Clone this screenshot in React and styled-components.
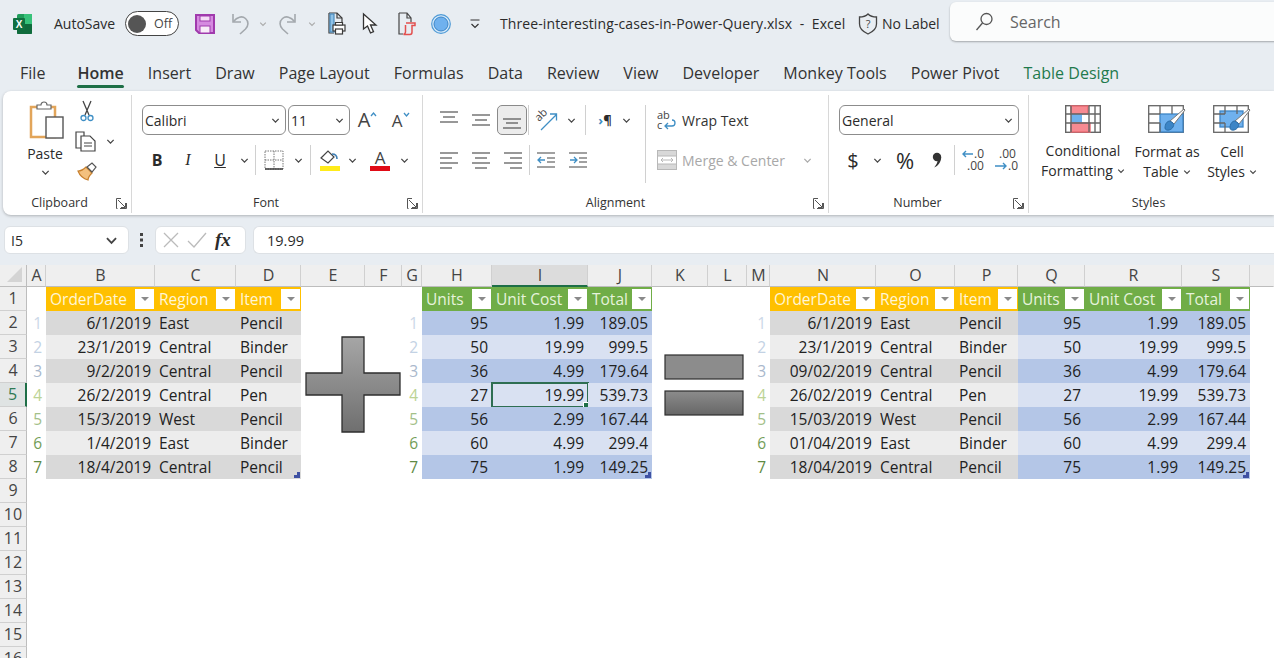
import React from 'react';
import styled, { createGlobalStyle } from 'styled-components';

const GlobalStyle = createGlobalStyle`
  html, body { margin: 0; padding: 0; height: 100%; background: #e8edf2; }
  * { box-sizing: border-box; }
  svg { overflow: visible; }
`;

const Page = styled.div`
  width: 1274px;
  height: 658px;
  overflow: hidden;
  background: #e8edf2;
  color: #2b2b2b;
  font-family: "Open Sans", "Liberation Sans", sans-serif;
`;

/* title bar */
const TitleBar = styled.div`
  height: 47px;
  display: flex;
  align-items: center;
  padding-left: 12px;
  font-size: 14px;
  white-space: nowrap;
`;
const Slot = styled.div`
  flex: none;
  width: ${(p) => p.$w}px;
  height: ${(p) => p.$h || 30}px;
  display: flex;
  align-items: center;
  justify-content: ${(p) => p.$start ? 'flex-start' : 'center'};
  font-size: 14px;
  letter-spacing: ${(p) => p.$ls || 0}px;
  color: ${(p) => p.$color || 'inherit'};
`;
const Toggle = styled.div`
  flex: none;
  width: 54px;
  height: 25px;
  border: 1px solid #444;
  border-radius: 13px;
  background: #fff;
  display: flex;
  align-items: center;
  gap: 8px;
  padding-left: 2px;
  font-size: 12.5px;
  color: #444;
  margin-right: 16px;
`;
const Knob = styled.span`
  width: 18px;
  height: 18px;
  border-radius: 50%;
  background: #555;
`;
const SearchBox = styled.div`
  flex: none;
  width: 330px;
  height: 39px;
  margin: -4px 0 0 8px;
  background: #fbfcfc;
  border-radius: 6px 0 0 6px;
  box-shadow: 0 1px 2px rgba(0, 0, 0, 0.3);
  display: flex;
  align-items: center;
  gap: 16px;
  padding-left: 25px;
  font-size: 16px;
  color: #666;
`;

/* tabs */
const Tabs = styled.div`
  height: 44px;
  display: flex;
  align-items: flex-end;
  gap: 24px;
  padding: 0 0 6px 20px;
`;
const Tab = styled.div`
  position: relative;
  font-size: 16px;
  line-height: 24px;
  letter-spacing: 0.03px;
  margin-right: ${(p) => p.$first ? 8 : 0}px;
  font-weight: ${(p) => p.$active ? 600 : 400};
  color: ${(p) => p.$green ? '#1f7a4d' : '#333'};
  &::after {
    content: '';
    display: ${(p) => p.$active ? 'block' : 'none'};
    position: absolute;
    left: 0;
    right: 0;
    bottom: -3px;
    height: 3px;
    border-radius: 2px;
    background: #1e6f47;
  }
`;

/* ribbon */
const Ribbon = styled.div`
  height: 124px;
  margin-left: 3px;
  background: #fff;
  border-radius: 8px 0 0 8px;
  box-shadow: 0 1px 3px rgba(0, 0, 0, 0.25);
  display: flex;
`;
const Group = styled.div`
  position: relative;
  flex: none;
  width: ${(p) => p.$w}px;
  height: 118px;
  margin-top: 4px;
  padding: 10px 0 0 ${(p) => p.$pad || 0}px;
  border-right: ${(p) => p.$last ? 'none' : '1px solid #d8d8d8'};
`;
const GroupLabel = styled.div`
  position: absolute;
  left: 0;
  right: 0;
  bottom: 2px;
  text-align: center;
  font-size: 12.5px;
  line-height: 16px;
  color: #333;
  padding-right: ${(p) => p.$shift || 0}px;
`;
const Launcher = styled.div`
  position: absolute;
  right: 4px;
  bottom: 4px;
  width: 11px;
  height: 11px;
  display: flex;
`;
const Row = styled.div`
  display: flex;
  align-items: center;
  height: 30px;
  margin-bottom: ${(p) => p.$mb ?? 10}px;
`;
const Combo = styled.div`
  flex: none;
  width: ${(p) => p.$w}px;
  height: 30px;
  margin-right: ${(p) => p.$mr || 0}px;
  border: 1px solid #8c8c8c;
  border-radius: 6px;
  display: flex;
  align-items: center;
  justify-content: space-between;
  padding: 0 5px 0 2px;
  font-size: 14px;
`;
const Sep = styled.div`
  flex: none;
  width: 1px;
  height: 30px;
  background: #d0d0d0;
  margin: 0 ${(p) => p.$m ?? 0}px;
`;
const Selected = styled.div`
  flex: none;
  width: 30px;
  height: 30px;
  border: 1px solid #8a8a8a;
  border-radius: 5px;
  background: #ececec;
  display: flex;
  align-items: center;
  justify-content: center;
`;
const ClipLayout = styled.div`
  display: flex;
  padding-left: 22px;
`;
const PasteCol = styled.div`
  width: 40px;
  margin-top: -4px;
  display: flex;
  flex-direction: column;
  align-items: center;
  font-size: 14px;
  line-height: 20px;
  svg.paste { margin: 0 0 1px 4px; }
  svg.chev { margin-top: 4px; }
`;
const SmallCol = styled.div`
  width: 60px;
  margin-top: -8px;
  display: flex;
  flex-direction: column;
  gap: 2px;
`;
const AlignLayout = styled.div`
  display: flex;
`;
const LongSep = styled.div`
  width: 1px;
  height: 78px;
  background: #d0d0d0;
`;
const WrapCol = styled.div`
  padding-left: 11px;
`;
const WrapRow = styled.div`
  display: flex;
  align-items: center;
  gap: 5px;
  height: 30px;
  margin-bottom: 10px;
  font-size: 14px;
  white-space: nowrap;
  color: ${(p) => p.$off ? '#a8a8a8' : '#333'};
`;
const StylesRow = styled.div`
  display: flex;
  padding-left: 11px;
`;
const StyleBtn = styled.div`
  flex: none;
  width: ${(p) => p.$w}px;
  display: flex;
  flex-direction: column;
  align-items: center;
  font-size: 14px;
  line-height: 20px;
  svg.big { margin-bottom: 8px; }
  span { display: flex; align-items: center; gap: 4px; white-space: nowrap; }
`;

/* formula bar */
const FormulaBar = styled.div`
  height: 28px;
  margin-top: 11px;
  display: flex;
  align-items: stretch;
  padding-left: 4px;
`;
const NameBox = styled.div`
  width: 125px;
  background: #fff;
  border: 1px solid #dde1e5;
  border-radius: 6px;
  display: flex;
  align-items: center;
  justify-content: space-between;
  padding: 0 10px 0 6px;
  font-size: 14px;
`;
const Dots = styled.div`
  width: 26px;
  display: flex;
  align-items: center;
  justify-content: center;
`;
const FxBox = styled.div`
  width: 91px;
  margin-right: 7px;
  background: #fff;
  border: 1px solid #dde1e5;
  border-radius: 6px;
  display: flex;
  align-items: center;
  gap: 8px;
  padding-left: 7px;
`;
const Fx = styled.span`
  font-family: "Liberation Serif", serif;
  font-style: italic;
  font-weight: 700;
  font-size: 19px;
  line-height: 20px;
`;
const FormulaInput = styled.div`
  flex: 1;
  background: #fff;
  border: 1px solid #dde1e5;
  border-right: none;
  border-radius: 6px 0 0 6px;
  display: flex;
  align-items: center;
  padding-left: 13px;
  font-size: 14.5px;
`;

/* sheet */
const Sheet = styled.div`
  position: relative;
  margin-top: 11px;
  background: #fff;
  display: grid;
  grid-template-columns: ${(p) => p.$cols};
  grid-template-rows: 22px;
  grid-auto-rows: 24px;
  font-size: 15.5px;
`;
const Corner = styled.div`
  background: #efefef;
  border-right: 1px solid #bdbdbd;
  border-bottom: 1px solid #bdbdbd;
  display: flex;
  align-items: flex-end;
  justify-content: flex-end;
  padding: 0 3px 3px 0;
`;
const ColHead = styled.div`
  background: ${(p) => p.$on ? '#dcdcdc' : '#efefef'};
  border-right: 1px solid ${(p) => p.$blank ? '#efefef' : '#d0d0d0'};
  border-bottom: ${(p) => p.$on ? '2px solid #1e6f47' : '1px solid #bdbdbd'};
  padding-left: 1px;
  text-align: center;
  font-size: 16px;
  line-height: 21px;
  color: #444;
`;
const RowHead = styled.div`
  background: ${(p) => p.$on ? '#dfe3e3' : '#efefef'};
  border-right: ${(p) => p.$on ? '2px solid #1e6f47' : '1px solid #bdbdbd'};
  border-bottom: 1px solid #d0d0d0;
  text-align: center;
  font-size: 16px;
  line-height: 23px;
  color: ${(p) => p.$on ? '#2f7a55' : '#444'};
`;
const Cell = styled.div`
  position: relative;
  background: ${(p) => p.$bg || '#fff'};
  color: ${(p) => p.$color || '#222'};
  text-align: ${(p) => p.$right ? 'right' : 'left'};
  line-height: 24px;
  padding: 0 4px;
  white-space: nowrap;
  overflow: visible;
`;
const HeadCell = styled.div`
  background: ${(p) => p.$bg};
  color: ${(p) => p.$fg};
  display: flex;
  align-items: center;
  justify-content: space-between;
  padding: 0 1px 0 4px;
  white-space: nowrap;
`;
const FilterBtn = styled.span`
  flex: none;
  width: 19px;
  height: 20px;
  background: #fff;
  display: flex;
  align-items: center;
  justify-content: center;
  &::after {
    content: '';
    border-left: 4px solid transparent;
    border-right: 4px solid transparent;
    border-top: 4px solid #8a8a8a;
  }
`;
const TableEnd = styled.span`
  position: absolute;
  right: 1px;
  bottom: 1px;
  width: 6px;
  height: 6px;
  background: #3f51a3;
  clip-path: polygon(100% 0, 100% 100%, 0 100%, 0 50%, 50% 50%, 50% 0);
`;
const Cursor = styled.span`
  position: absolute;
  inset: -1px -1px -1px -1px;
  border: 2px solid #2e6e52;
  pointer-events: none;
  &::after {
    content: '';
    position: absolute;
    right: -4px;
    bottom: -4px;
    width: 6px;
    height: 6px;
    background: #1e6f47;
    border: 1px solid #fff;
  }
`;
const PlusShape = styled.svg`
  position: absolute;
  left: 305px;
  top: 71px;
`;
const EqualsShape = styled.svg`
  position: absolute;
  left: 664px;
  top: 89px;
`;

/* icons */
const Chev = ({ c = '#444', s = 9 }) => (
  <svg className="chev" width={s} height={s} viewBox="0 0 10 10" fill="none" stroke={c} strokeWidth="1.4">
    <path d="M1.5 3.2 5 6.8l3.5-3.6" />
  </svg>
);
const LauncherIcon = () => (
  <Launcher>
    <svg width="11" height="11" viewBox="0 0 11 11" fill="none" stroke="#555" strokeWidth="1">
      <path d="M5 .5H.5v10h1M2 2l7 7M9.500 5v4.500H5M4 10.500h6.500V5" />
    </svg>
  </Launcher>
);
const ExcelLogo = () => (
  <svg width="21" height="22" viewBox="0 0 21 22">
    <rect x="5" y="1" width="15" height="20" rx="1.5" fill="#1f9d5b" />
    <rect x="5" y="11" width="15" height="10" rx="1" fill="#0f6b3c" />
    <rect x="12" y="1" width="8" height="10" fill="#37c27a" />
    <rect x="1" y="5" width="12" height="12" rx="1" fill="#107040" />
    <text x="7" y="15" textAnchor="middle" fontSize="10" fontWeight="700" fill="#fff" fontFamily="Liberation Sans">X</text>
  </svg>
);
const SaveIcon = () => (
  <svg width="20" height="20" viewBox="0 0 20 20">
    <path d="M1 1h18v18H4l-3-3z" fill="#d58ae0" stroke="#a03aad" strokeWidth="2" />
    <rect x="5" y="2" width="10" height="5" fill="#f4dcf6" stroke="#a03aad" />
    <rect x="5" y="12" width="10" height="7" fill="#f8ecf9" stroke="#a03aad" />
  </svg>
);
const UndoIcon = ({ flip }) => (
  <svg width="20" height="24" viewBox="0 0 20 24" fill="none" stroke="#a3a8ad" strokeWidth="1.6" style={flip ? { transform: 'scaleX(-1)' } : undefined}>
    <path d="M2 2v8h8" />
    <path d="M2.5 9.5C6 5 11 3.5 14.5 6.5c3.5 3 3 7.5 0 10.5L9 22" />
  </svg>
);
const PrintDocIcon = () => (
  <svg width="18" height="24" viewBox="0 0 18 24" fill="none" stroke="#3a3a3a" strokeWidth="1.2">
    <path d="M1 1h8l5 5v6M1 1v20h5" />
    <rect x="2" y="2" width="4" height="18" fill="#8ec2e8" stroke="#4a8bbd" />
    <path d="M9 1v5h5" />
    <rect x="5" y="13" width="12" height="6" fill="#fff" />
    <rect x="7.5" y="17" width="7" height="5" fill="#fff" />
    <path d="M7.5 10.5h7v2.5h-7z" fill="#fff" />
  </svg>
);
const PointerIcon = () => (
  <svg width="16" height="24" viewBox="0 0 16 24" fill="#fff" stroke="#333" strokeWidth="1.3">
    <path d="M1.5 2v15l4-3 3 7 3-1.3-3-6.7h5.5z" />
  </svg>
);
const RedDocIcon = () => (
  <svg width="19" height="24" viewBox="0 0 19 24" fill="none" strokeWidth="1.2">
    <path d="M1 1h8l4 5v4M1 1v21h4M9 1v5h4" stroke="#444" />
    <path d="M8 11h9v2.5h-3V20c0 2-1 2.5-2 2.5H5.5c1.5-.5 2-1.5 2-2.5V13" stroke="#e2504f" strokeWidth="1.5" />
  </svg>
);
const CircleIcon = () => (
  <svg width="20" height="22" viewBox="0 0 20 22">
    <circle cx="10" cy="11" r="9.3" fill="#d6eafa" stroke="#4e9ad6" strokeWidth="1.2" />
    <circle cx="10" cy="11" r="7" fill="#6fb1ee" stroke="#3c85c6" />
  </svg>
);
const QatMore = () => (
  <svg width="10" height="12" viewBox="0 0 10 12" fill="none" stroke="#333" strokeWidth="1.2">
    <path d="M0.5 2h9M1.5 6 5 9.5 8.5 6" />
  </svg>
);
const ShieldIcon = () => (
  <svg width="20" height="22" viewBox="0 0 20 22" fill="none" stroke="#444" strokeWidth="1.3">
    <path d="M10 1c2 2 5 3 8.5 3v7c0 5-4 8-8.5 10C5.500 19 1.500 16 1.500 11V4C5 4 8 3 10 1z" />
    <text x="10" y="15" textAnchor="middle" fontSize="11" fill="#444" stroke="none" fontFamily="Open Sans">?</text>
  </svg>
);
const SearchIcon = () => (
  <svg width="19" height="19" viewBox="0 0 19 19" fill="none" stroke="#555" strokeWidth="1.3">
    <circle cx="11.500" cy="7" r="5.500" />
    <path d="M7.500 11 1.500 18" />
  </svg>
);
const PasteIcon = () => (
  <svg className="paste" width="36" height="42" viewBox="0 0 36 42">
    <path d="M2 6h24v30H2z" fill="#fff" stroke="#e2a55a" strokeWidth="2.500" />
    <path d="M8 8V4h4c0-4 6-4 6 0h4v4z" fill="#fff" stroke="#666" strokeWidth="1.200" />
    <rect x="17" y="16" width="17" height="21" fill="#fff" stroke="#555" strokeWidth="1.400" />
  </svg>
);
const ScissorsIcon = () => (
  <svg width="16" height="22" viewBox="0 0 16 22" fill="none" strokeWidth="1.300">
    <path d="M4 1l6 14M12 1 6 15" stroke="#444" />
    <circle cx="4.500" cy="18" r="2.500" stroke="#3f8fc5" />
    <circle cx="11.500" cy="18" r="2.500" stroke="#3f8fc5" />
  </svg>
);
const CopyIcon = () => (
  <svg width="21" height="21" viewBox="0 0 21 21" fill="#fff" stroke="#444" strokeWidth="1.200">
    <path d="M1 1h8v16H1z" />
    <path d="M6 5h9l5 5v10H6z" />
    <path d="M9 12h8M9 15h8" />
  </svg>
);
const BrushIcon = () => (
  <svg width="21" height="20" viewBox="0 0 21 20" fill="none">
    <path d="M1 10c4 0 6-2 8-4l6 6c-2 2-4 5-4 7C7 18 3 15 1 10z" fill="#f3c07e" stroke="#c77f2c" strokeWidth="1.200" />
    <path d="M10 6l5-4 4 4-4 5z" fill="#fff" stroke="#555" strokeWidth="1.200" />
  </svg>
);
const GrowA = ({ up }) => (
  <svg width="20" height="20" viewBox="0 0 20 20" fill="none">
    <text x="7" y="17" textAnchor="middle" fontSize={up ? 20 : 17} fill="#444" fontFamily="Open Sans">A</text>
    <path d={up ? 'M14 6l2.500-3L19 6' : 'M14 3l2.500 3L19 3'} stroke="#3f8fc5" strokeWidth="1.300" />
  </svg>
);
const BorderIcon = () => (
  <svg width="20" height="20" viewBox="0 0 20 20" fill="none" stroke="#777" strokeWidth="1" strokeDasharray="1.500 1">
    <rect x="1" y="1" width="18" height="18" />
    <path d="M10 1v18M1 10h18" />
    <path d="M1 19h18" stroke="#333" strokeWidth="1.400" strokeDasharray="none" />
  </svg>
);
const FillIcon = () => (
  <svg width="21" height="22" viewBox="0 0 21 22">
    <path d="M2 9l7-7 6 6-6 6z" fill="#fff" stroke="#444" strokeWidth="1.200" />
    <path d="M13 5c3 0 5 2 5 5" fill="none" stroke="#3f7fb5" strokeWidth="1.600" />
    <rect x="1" y="17" width="20" height="5" fill="#ffeb1a" />
  </svg>
);
const FontColorIcon = () => (
  <svg width="20" height="22" viewBox="0 0 20 22">
    <text x="10" y="15" textAnchor="middle" fontSize="17" fill="#444" fontFamily="Open Sans">A</text>
    <rect x="0" y="17" width="20" height="5" fill="#e00b16" />
  </svg>
);
const Lines = ({ rows }) => (
  <svg width="20" height="20" viewBox="0 0 20 20" stroke="#444" strokeWidth="1.100">
    {rows.map(([x1, x2, y]) => <line key={y} x1={x1} x2={x2} y1={y} y2={y} />)}
  </svg>
);
const OrientIcon = () => (
  <svg width="22" height="22" viewBox="0 0 22 22" fill="none">
    <text x="0" y="0" fontSize="11" fill="#444" fontFamily="Open Sans" transform="translate(3 13) rotate(-45)">ab</text>
    <path d="M5 21 20 6M14 5h6.500v6.500" stroke="#3f8fc5" strokeWidth="1.300" />
  </svg>
);
const IndentIcon = ({ out }) => (
  <svg width="20" height="18" viewBox="0 0 20 18" fill="none" stroke="#444" strokeWidth="1.100">
    <path d="M1 2h18M1 16h18M11 7h8M11 11h8" />
    <path d={out ? 'M9 9H2M5 6 2 9l3 3' : 'M2 9h7M6 6l3 3-3 3'} stroke="#3f8fc5" strokeWidth="1.300" />
  </svg>
);
const WrapIcon = () => (
  <svg width="20" height="22" viewBox="0 0 20 22" fill="none">
    <text x="0" y="10" fontSize="11" fill="#444" fontFamily="Open Sans">ab</text>
    <text x="0" y="20" fontSize="11" fill="#444" fontFamily="Open Sans">c</text>
    <path d="M8 17h7c4 0 4-6 0-6M11 14l-3 3 3 3" stroke="#3f8fc5" strokeWidth="1.300" />
  </svg>
);
const MergeIcon = () => (
  <svg width="20" height="20" viewBox="0 0 20 20" fill="#d8d8d8" stroke="#b8b8b8">
    <rect x="0.500" y="0.500" width="19" height="19" />
    <rect x="0.500" y="6" width="19" height="8" fill="#fff" />
    <path d="M4 10h12M6 8l-2 2 2 2M14 8l2 2-2 2" fill="none" />
  </svg>
);
const CommaIcon = () => (
  <svg width="10" height="16" viewBox="0 0 10 16" fill="#333">
    <circle cx="5" cy="5" r="4.200" />
    <path d="M9.200 5c0 5-3 9-7 10.500 2-2.500 3.500-5 3.500-8z" />
  </svg>
);
const DecimalIcon = ({ less }) => (
  <svg width="24" height="24" viewBox="0 0 24 24" fill="none">
    {less ? (
      <>
        <text x="12" y="10" fontSize="12" fill="#444" fontFamily="Open Sans">.0</text>
        <text x="5" y="22" fontSize="12" fill="#444" fontFamily="Open Sans">.00</text>
        <path d="M11 6H1M4 3 1 6l3 3" stroke="#3f8fc5" strokeWidth="1.400" />
      </>
    ) : (
      <>
        <text x="5" y="10" fontSize="12" fill="#444" fontFamily="Open Sans">.00</text>
        <text x="14" y="22" fontSize="12" fill="#444" fontFamily="Open Sans">.0</text>
        <path d="M1 18h11M9 15l3 3-3 3" stroke="#3f8fc5" strokeWidth="1.400" />
      </>
    )}
  </svg>
);
const CondIcon = () => (
  <svg className="big" width="36" height="28" viewBox="0 0 36 28" fill="#fff" stroke="#666" strokeWidth="1.400">
    <rect x="0.700" y="0.700" width="34.600" height="26.600" />
    <rect x="6" y="1" width="17" height="8" fill="#f78a92" stroke="#e86a72" />
    <rect x="6" y="9" width="11" height="9" fill="#6fb1ee" stroke="none" />
    <rect x="6" y="18" width="19" height="9" fill="#f78a92" stroke="#e86a72" />
    <path d="M6 1v26M24 1v26M30 1v26M1 9h34M1 18h34" fill="none" />
  </svg>
);
const TableIcon = ({ cell }) => (
  <svg className="big" width="38" height="29" viewBox="0 0 38 29" fill="#fff" stroke="#666" strokeWidth="1.300">
    <rect x="0.700" y="0.700" width="34.600" height="26.600" />
    {cell
      ? <rect x="7" y="6" width="23" height="16" fill="#6fb1ee" stroke="#3c85c6" />
      : <rect x="12" y="9" width="23" height="18" fill="#6fb1ee" stroke="#3c85c6" />}
    <path d="M12 1v8M24 1v8M1 9h11M1 18h11M12 18v9" fill="none" />
    <path d="M36 4 37 5 26 19 22 16z" fill="#fff" stroke="#777" strokeWidth="1" />
    <path d="M22 16c-3 0-5 3-5 7 0 3 6 3 8-1 1-2 1-3 0-4z" fill="#3c85c6" stroke="#2c6ea8" strokeWidth="1" />
  </svg>
);
const Tri = () => (
  <svg width="17" height="17" viewBox="0 0 17 17"><path d="M16 1v15H1z" fill="#d4d4d4" /></svg>
);
const CloseX = () => (
  <svg width="16" height="16" viewBox="0 0 16 16" stroke="#bbb" strokeWidth="1.300"><path d="M1 1l14 14M15 1 1 15" /></svg>
);
const Check = () => (
  <svg width="20" height="16" viewBox="0 0 20 16" fill="none" stroke="#bbb" strokeWidth="1.300"><path d="M1 9l6 6L19 1" /></svg>
);
const KebabIcon = () => (
  <svg width="4" height="14" viewBox="0 0 4 14" fill="#444"><rect width="3" height="3" /><rect y="5.500" width="3" height="3" /><rect y="11" width="3" height="3" /></svg>
);

/* data */
const tabs = ['File', 'Home', 'Insert', 'Draw', 'Page Layout', 'Formulas', 'Data', 'Review', 'View', 'Developer', 'Monkey Tools', 'Power Pivot', 'Table Design'];
const colNames = ['A', 'B', 'C', 'D', 'E', 'F', 'G', 'H', 'I', 'J', 'K', 'L', 'M', 'N', 'O', 'P', 'Q', 'R', 'S', ''];
const colWidths = [19, 109, 81, 65, 64, 37, 20, 70, 96, 64, 56, 39, 23, 106, 79, 63, 67, 97, 68, 24];
const indexColors = ['#cbd8e8', '#c3d2e4', '#a9b8cc', '#bcd394', '#a3c089', '#739d57', '#5f8a44'];
const leftRows = [
  ['6/1/2019', 'East', 'Pencil'], ['23/1/2019', 'Central', 'Binder'], ['9/2/2019', 'Central', 'Pencil'], ['26/2/2019', 'Central', 'Pen'],
  ['15/3/2019', 'West', 'Pencil'], ['1/4/2019', 'East', 'Binder'], ['18/4/2019', 'Central', 'Pencil'],
];
const midRows = [
  ['95', '1.99', '189.05'], ['50', '19.99', '999.5'], ['36', '4.99', '179.64'], ['27', '19.99', '539.73'],
  ['56', '2.99', '167.44'], ['60', '4.99', '299.4'], ['75', '1.99', '149.25'],
];
const rightDates = ['6/1/2019', '23/1/2019', '09/02/2019', '26/02/2019', '15/03/2019', '01/04/2019', '18/04/2019'];
const grey = ['#d9d9d9', '#ededed'];
const blue = ['#b4c6e7', '#d9e1f2'];

const orangeHead = (names) => names.map((n) => (
  <HeadCell key={n} $bg="#ffc000" $fg="#fff6d6">{n}<FilterBtn /></HeadCell>
));
const greenHead = (names) => names.map((n) => (
  <HeadCell key={n} $bg="#70ad47" $fg="#e6f3dc">{n}<FilterBtn /></HeadCell>
));

function DataRow({ i }) {
  const last = i === 6;
  const g = grey[i % 2];
  const b = blue[i % 2];
  const idx = <Cell $right $color={indexColors[i]}>{i + 1}</Cell>;
  return (
    <>
      {idx}
      <Cell $bg={g} $right>{leftRows[i][0]}</Cell>
      <Cell $bg={g}>{leftRows[i][1]}</Cell>
      <Cell $bg={g}>{leftRows[i][2]}{last && <TableEnd />}</Cell>
      <Cell />
      <Cell />
      {idx}
      <Cell $bg={b} $right>{midRows[i][0]}</Cell>
      <Cell $bg={b} $right>{midRows[i][1]}{i === 3 && <Cursor />}</Cell>
      <Cell $bg={b} $right>{midRows[i][2]}{last && <TableEnd />}</Cell>
      <Cell />
      <Cell />
      {idx}
      <Cell $bg={g} $right>{rightDates[i]}</Cell>
      <Cell $bg={g}>{leftRows[i][1]}</Cell>
      <Cell $bg={g}>{leftRows[i][2]}</Cell>
      <Cell $bg={b} $right>{midRows[i][0]}</Cell>
      <Cell $bg={b} $right>{midRows[i][1]}</Cell>
      <Cell $bg={b} $right>{midRows[i][2]}{last && <TableEnd />}</Cell>
      <Cell />
    </>
  );
}

export default function App() {
  const blanks = (n) => Array.from({ length: n }, (_, k) => <Cell key={k} />);
  return (
    <Page>
      <GlobalStyle />
      <TitleBar>
        <Slot $w={42} $start><ExcelLogo /></Slot>
        <Slot $w={71} $start>AutoSave</Slot>
        <Toggle><Knob />Off</Toggle>
        <Slot $w={20}><SaveIcon /></Slot>
        <Slot $w={14} />
        <Slot $w={24}><UndoIcon /></Slot>
        <Slot $w={20}><Chev c="#aaa" s={8} /></Slot>
        <Slot $w={28}><UndoIcon flip /></Slot>
        <Slot $w={22}><Chev c="#aaa" s={8} /></Slot>
        <Slot $w={28}><PrintDocIcon /></Slot>
        <Slot $w={37}><PointerIcon /></Slot>
        <Slot $w={39}><RedDocIcon /></Slot>
        <Slot $w={28}><CircleIcon /></Slot>
        <Slot $w={40}><QatMore /></Slot>
        <Slot $w={5} />
        <Slot $w={353} $start $ls={0.1}>Three-interesting-cases-in-Power-Query.xlsx&nbsp; -&nbsp; Excel</Slot>
        <Slot $w={29}><ShieldIcon /></Slot>
        <Slot $w={60} $start>No Label</Slot>
        <SearchBox><SearchIcon />Search</SearchBox>
      </TitleBar>

      <Tabs>
        {tabs.map((t) => <Tab key={t} $first={t === 'File'} $active={t === 'Home'} $green={t === 'Table Design'}>{t}</Tab>)}
      </Tabs>

      <Ribbon>
        <Group $w={129}>
          <ClipLayout>
            <PasteCol>
              <PasteIcon />
              Paste
              <Chev />
            </PasteCol>
            <SmallCol>
              <Slot $w={44} $h={28}><ScissorsIcon /></Slot>
              <Slot $w={60} $h={28} $start><Slot $w={41}><CopyIcon /></Slot><Chev /></Slot>
              <Slot $w={44} $h={28}><BrushIcon /></Slot>
            </SmallCol>
          </ClipLayout>
          <GroupLabel $shift={15}>Clipboard</GroupLabel>
          <LauncherIcon />
        </Group>

        <Group $w={291} $pad={10}>
          <Row>
            <Combo $w={144} $mr={2}>Calibri<Chev /></Combo>
            <Combo $w={62}>11<Chev /></Combo>
            <Slot $w={34}><GrowA up /></Slot>
            <Slot $w={32}><GrowA /></Slot>
          </Row>
          <Row>
            <Slot $w={30}><b style={{ fontSize: 16 }}>B</b></Slot>
            <Slot $w={32}><i style={{ fontSize: 16, fontFamily: 'Liberation Serif' }}>I</i></Slot>
            <Slot $w={32}><u style={{ fontSize: 16 }}>U</u></Slot>
            <Slot $w={16}><Chev /></Slot>
            <Sep $m={3} />
            <Slot $w={30}><BorderIcon /></Slot>
            <Slot $w={18}><Chev /></Slot>
            <Sep $m={3} />
            <Slot $w={30}><FillIcon /></Slot>
            <Slot $w={16}><Chev /></Slot>
            <Slot $w={40}><FontColorIcon /></Slot>
            <Slot $w={8}><Chev /></Slot>
          </Row>
          <GroupLabel $shift={22}>Font</GroupLabel>
          <LauncherIcon />
        </Group>

        <Group $w={406} $pad={10}>
          <AlignLayout>
            <div>
              <Row>
                <Slot $w={32}><Lines rows={[[1, 19, 2], [4, 16, 7], [1, 19, 12]]} /></Slot>
                <Slot $w={32}><Lines rows={[[1, 19, 5], [4, 16, 10], [1, 19, 15]]} /></Slot>
                <Selected><Lines rows={[[1, 19, 9], [4, 16, 13], [1, 19, 18]]} /></Selected>
                <Sep $m={1} />
                <Slot $w={34}><OrientIcon /></Slot>
                <Slot $w={14}><Chev /></Slot>
                <Sep $m={7} />
                <Slot $w={24}><b style={{ fontSize: 13 }}><span style={{ color: '#3f8fc5' }}>›</span>¶</b></Slot>
                <Slot $w={19}><Chev /></Slot>
              </Row>
              <Row>
                <Slot $w={32}><Lines rows={[[1, 19, 3], [1, 13, 8], [1, 19, 13], [1, 13, 18]]} /></Slot>
                <Slot $w={32}><Lines rows={[[1, 19, 3], [4, 16, 8], [1, 19, 13], [4, 16, 18]]} /></Slot>
                <Slot $w={32}><Lines rows={[[1, 19, 3], [7, 19, 8], [1, 19, 13], [7, 19, 18]]} /></Slot>
                <Sep />
                <Slot $w={32}><IndentIcon out /></Slot>
                <Slot $w={32}><IndentIcon /></Slot>
              </Row>
            </div>
            <Slot $w={9} />
            <LongSep />
            <WrapCol>
              <WrapRow><WrapIcon />Wrap Text</WrapRow>
              <WrapRow $off><MergeIcon />Merge &amp; Center<Slot $w={36}><Chev c="#aaa" /></Slot></WrapRow>
            </WrapCol>
          </AlignLayout>
          <GroupLabel $shift={20}>Alignment</GroupLabel>
          <LauncherIcon />
        </Group>

        <Group $w={200} $pad={10}>
          <Row>
            <Combo $w={180}>General<Chev /></Combo>
          </Row>
          <Row>
            <Slot $w={28}><span style={{ fontSize: 20 }}>$</span></Slot>
            <Slot $w={20}><Chev /></Slot>
            <Slot $w={36}><span style={{ fontSize: 22 }}>%</span></Slot>
            <Slot $w={28}><CommaIcon /></Slot>
            <Slot $w={3} />
            <Sep />
            <Slot $w={38}><DecimalIcon less /></Slot>
            <Slot $w={26}><DecimalIcon /></Slot>
          </Row>
          <GroupLabel $shift={22}>Number</GroupLabel>
          <LauncherIcon />
        </Group>

        <Group $w={243} $last>
          <StylesRow>
            <StyleBtn $w={86}><CondIcon />Conditional<span>Formatting <Chev s={8} /></span></StyleBtn>
            <StyleBtn $w={82}><TableIcon />Format as<span>Table <Chev s={8} /></span></StyleBtn>
            <StyleBtn $w={48}><TableIcon cell />Cell<span>Styles <Chev s={8} /></span></StyleBtn>
          </StylesRow>
          <GroupLabel $shift={4}>Styles</GroupLabel>
        </Group>
      </Ribbon>

      <FormulaBar>
        <NameBox>I5<Chev s={13} /></NameBox>
        <Dots><KebabIcon /></Dots>
        <FxBox><CloseX /><Check /><Fx>fx</Fx></FxBox>
        <FormulaInput>19.99</FormulaInput>
      </FormulaBar>

      <Sheet $cols={`27px ${colWidths.map((w) => w + 'px').join(' ')}`}>
        <Corner><Tri /></Corner>
        {colNames.map((c, k) => <ColHead key={k} $on={c === 'I'} $blank={c === ''}>{c}</ColHead>)}

        <RowHead>1</RowHead>
        <Cell />
        {orangeHead(['OrderDate', 'Region', 'Item'])}
        {blanks(3)}
        {greenHead(['Units', 'Unit Cost', 'Total'])}
        {blanks(3)}
        {orangeHead(['OrderDate', 'Region', 'Item'])}
        {greenHead(['Units', 'Unit Cost', 'Total'])}
        <Cell />

        {leftRows.map((_, i) => (
          <React.Fragment key={i}>
            <RowHead $on={i === 3}>{i + 2}</RowHead>
            <DataRow i={i} />
          </React.Fragment>
        ))}

        {[9, 10, 11, 12, 13, 14, 15, 16].map((n) => (
          <React.Fragment key={n}>
            <RowHead>{n}</RowHead>
            {blanks(20)}
          </React.Fragment>
        ))}

        <PlusShape width="97" height="97" viewBox="0 0 97 97">
          <defs>
            <linearGradient id="shapeFill" x1="0" y1="0" x2="0" y2="1">
              <stop offset="0" stopColor="#a6a6a6" />
              <stop offset="1" stopColor="#6f6f6f" />
            </linearGradient>
            <linearGradient id="shapeFillDark" x1="0" y1="0" x2="0" y2="1">
              <stop offset="0" stopColor="#8c8c8c" />
              <stop offset="1" stopColor="#666" />
            </linearGradient>
          </defs>
          <path d="M37 1h22v36h36v22H59v37H37V59H1V37h36z" fill="url(#shapeFill)" stroke="#2e2e2e" strokeWidth="1.300" />
        </PlusShape>
        <EqualsShape width="80" height="62" viewBox="0 0 80 62">
          <rect x="1" y="1" width="78" height="24" fill="#8c8c8c" stroke="#2e2e2e" strokeWidth="1.200" />
          <rect x="1" y="37" width="78" height="24" fill="url(#shapeFillDark)" stroke="#2e2e2e" strokeWidth="1.200" />
        </EqualsShape>
      </Sheet>
    </Page>
  );
}
